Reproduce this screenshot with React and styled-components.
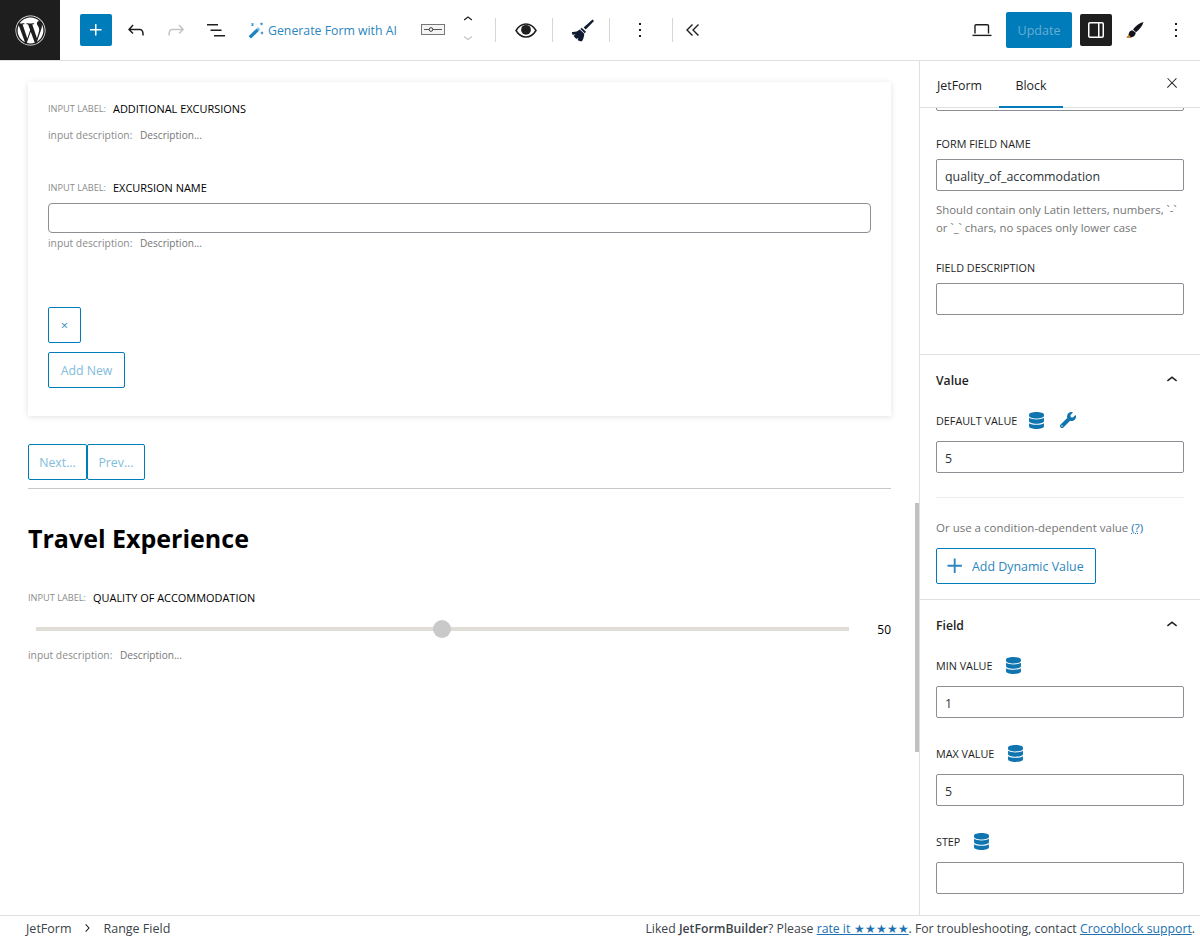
import React from "react";
import styled, { createGlobalStyle } from "styled-components";
import { FaWordpress, FaDatabase, FaWrench } from "react-icons/fa";

const Global = createGlobalStyle`
  html, body {
    margin: 0;
    height: 100%;
    overflow: hidden;
    background: #fff;
  }
  * { box-sizing: border-box; }
  body {
    font-family: "Open Sans", "Noto Sans", sans-serif;
    font-size: 12.5px;
    color: #1e1e1e;
  }
`;

const Page = styled.div`
  width: 1200px;
  height: 940px;
  display: flex;
  flex-direction: column;
  overflow: hidden;
`;

const Toolbar = styled.header`
  height: 61px;
  flex: none;
  display: flex;
  align-items: center;
  border-bottom: 1px solid #e0e0e0;
`;

const LogoBox = styled.div`
  width: 60px;
  height: 60px;
  background: #1e1e1e;
  color: #fff;
  display: flex;
  align-items: center;
  justify-content: center;
  margin-right: 20px;
  align-self: flex-start;
`;

const IconSlot = styled.div`
  width: ${p => p.$w || 40}px;
  height: 32px;
  flex: none;
  display: flex;
  align-items: center;
  justify-content: center;
  color: ${p => p.$color || "#1e1e1e"};
  margin-left: ${p => p.$ml || 0}px;
  padding: ${p => p.$pad || 0};
`;

const PrimarySquare = styled(IconSlot)`
  background: ${p => p.$bg || "#007cba"};
  color: #fff;
  border-radius: 2px;
`;

const AiButton = styled.div`
  display: flex;
  align-items: center;
  gap: 4px;
  margin-left: 12px;
  padding-top: 1px;
  width: 149px;
  color: #2d86bd;
  font-size: 12.3px;
  white-space: nowrap;
  flex: none;
`;

const Stepper = styled.div`
  width: 46px;
  height: 37px;
  margin: 0 4px 4px 0;
  display: flex;
  flex-direction: column;
  align-items: center;
  justify-content: space-between;
  flex: none;
`;

const Divider = styled.div`
  width: 1px;
  height: 24px;
  background: #d6d6d6;
  flex: none;
`;

const Push = styled.div`
  flex: 1;
`;

const UpdateButton = styled.div`
  width: 66px;
  height: 36px;
  margin: 0 8px 0 4px;
  padding-top: 1px;
  background: #007cba;
  color: #66aed4;
  border-radius: 2px;
  display: flex;
  align-items: center;
  justify-content: center;
  font-size: 12.5px;
  flex: none;
`;

const Body = styled.div`
  flex: 1;
  min-height: 0;
  display: flex;
`;

const Editor = styled.main`
  position: relative;
  width: 920px;
  flex: none;
  border-right: 1px solid #e0e0e0;
  padding: 21px 28px 0;
  overflow: hidden;
`;

const ScrollThumb = styled.div`
  position: absolute;
  right: 0;
  top: 442px;
  width: 4px;
  height: 249px;
  background: #c1c1c1;
`;

const Card = styled.section`
  height: 334px;
  padding: 18px 20px 0;
  box-shadow: 0 1px 6px rgba(0, 0, 0, 0.12);
`;

const LabelRow = styled.div`
  display: flex;
  align-items: center;
  gap: 8px;
  height: 18px;
  padding-bottom: 2px;
  margin-top: ${p => p.$mt || 0}px;
`;

const LabelHint = styled.span`
  font-size: 9.2px;
  color: #8b8b8b;
  white-space: nowrap;
  width: 57px;
`;

const LabelText = styled.span`
  font-size: 10.95px;
  color: #000;
  text-transform: uppercase;
  white-space: nowrap;
`;

const DescRow = styled.div`
  display: flex;
  align-items: center;
  gap: 8px;
  height: 18px;
  margin-top: ${p => p.$mt || 0}px;
`;

const DescHint = styled.span`
  font-size: 10.3px;
  color: #8b8b8b;
  white-space: nowrap;
  width: 84px;
`;

const DescText = styled.span`
  font-size: 10.1px;
  color: #757575;
  white-space: nowrap;
`;

const WideInput = styled.div`
  height: 30px;
  margin-top: 6px;
  border: 1px solid #8c8f94;
  border-radius: 4px;
`;

const OutlineButton = styled.div`
  display: flex;
  align-items: center;
  justify-content: center;
  width: ${p => p.$w}px;
  height: 36px;
  border: 1px solid #007cba;
  border-radius: 2px;
  color: ${p => p.$dark ? "#3a8fbe" : "#80bddc"};
  font-size: ${p => p.$dark ? 13 : 12.3}px;
  margin-top: ${p => p.$mt || 0}px;
  white-space: nowrap;
`;

const Steps = styled.div`
  display: flex;
  margin-top: 28px;
`;

const Rule = styled.hr`
  border: 0;
  height: 1px;
  background: #c8c8c8;
  margin: 8px 0 0;
`;

const Heading = styled.h2`
  margin: 30px 0 0;
  font-size: 25px;
  line-height: 38px;
  font-weight: 700;
  color: #000;
`;

const RangeRow = styled.div`
  display: flex;
  align-items: center;
  height: 24px;
  margin-top: 10px;
  padding-left: 8px;
`;

const Track = styled.div`
  position: relative;
  width: 813px;
  height: 4px;
  background: #e0dcd6;
`;

const Thumb = styled.div`
  position: absolute;
  left: 397px;
  top: -7px;
  width: 18px;
  height: 18px;
  border-radius: 50%;
  background: #c9c9c9;
`;

const RangeValue = styled.span`
  margin-left: auto;
  font-size: 12px;
  color: #000;
`;

const Sidebar = styled.aside`
  width: 280px;
  flex: none;
  display: flex;
  flex-direction: column;
  overflow: hidden;
`;

const Tabs = styled.div`
  height: 47px;
  flex: none;
  display: flex;
  align-items: center;
  border-bottom: 1px solid #e0e0e0;
  padding-left: 16px;
`;

const Tab = styled.div`
  font-size: 12.4px;
  height: 47px;
  display: flex;
  align-items: center;
  justify-content: center;
  flex: none;
  width: ${p => p.$w}px;
  margin-left: ${p => p.$ml || 0}px;
  border-bottom: ${p => p.$active ? "2px solid #007cba" : "0"};
  padding-top: ${p => p.$active ? "4px" : "2px"};
  margin-bottom: ${p => p.$active ? "-1px" : "0"};
`;

const TabClose = styled.div`
  margin-left: auto;
  margin-right: 20px;
  display: flex;
  padding-bottom: 2px;
`;

const SideScroll = styled.div`
  flex: 1;
  min-height: 0;
  overflow: hidden;
`;

const SidePanel = styled.div`
  display: flow-root;
  padding: 0 16px;
  border-bottom: ${p => p.$last ? "0" : "1px solid #e0e0e0"};
  height: ${p => p.$h ? p.$h + "px" : "auto"};
`;

const TextBox = styled.div`
  height: 32px;
  border: 1px solid #8c8f94;
  border-radius: 2px;
  padding: 2px 8px 0;
  display: flex;
  align-items: center;
  font-size: 12.4px;
  color: #2c3338;
  margin-top: ${p => p.$mt || 0}px;
`;

const ClippedBox = styled(TextBox)`
  margin-top: -29px;
`;

const FieldLabel = styled.div`
  display: flex;
  align-items: center;
  height: 18px;
  padding-bottom: 2px;
  font-size: 10.8px;
  text-transform: uppercase;
  color: #1e1e1e;
  margin-top: ${p => p.$mt || 0}px;
  white-space: nowrap;
`;

const FieldIcon = styled.span`
  display: inline-flex;
  color: #0f74b0;
  margin-left: ${p => p.$ml || 13}px;
`;

const Help = styled.p`
  margin: 10px 0 0;
  font-size: 11.4px;
  line-height: 18px;
  color: #757575;
`;

const PanelHeader = styled.div`
  display: flex;
  align-items: center;
  justify-content: space-between;
  height: 18px;
  margin-top: 16px;
  padding-right: 1px;
  font-size: 12.2px;
  font-weight: 600;
  color: #1e1e1e;
`;

const ThinRule = styled.div`
  height: 1px;
  background: #ececec;
  margin-top: 24px;
`;

const ConditionText = styled.div`
  margin-top: 22px;
  height: 18px;
  font-size: 11.5px;
  color: #757575;
  white-space: nowrap;

  a {
    color: #2271b1;
    text-decoration: underline;
    text-decoration-style: dotted;
  }
`;

const DynamicButton = styled.div`
  margin-top: 10px;
  width: 160px;
  height: 36px;
  border: 1px solid #007cba;
  border-radius: 2px;
  display: flex;
  align-items: center;
  gap: 2px;
  padding-left: 3px;
  color: #2d86bd;
  font-size: 12.4px;
  white-space: nowrap;
`;

const Footer = styled.footer`
  height: 25px;
  flex: none;
  border-top: 1px solid #e0e0e0;
  display: flex;
  align-items: center;
  padding: 0 5px 0 26px;
  font-size: 12.5px;
  color: #3c434a;
  white-space: nowrap;
`;

const Crumb = styled.span`
  display: flex;
  align-items: center;
`;

const FooterNote = styled.span`
  margin-left: auto;
  font-size: 12.25px;

  b {
    font-weight: 600;
  }

  a {
    color: #2271b1;
    text-decoration: underline;
  }
`;

const Wp = ({ size = 24, d, fill = "currentColor" }) => (
  <svg width={size} height={size} viewBox="0 0 24 24" fill={fill}>
    <path d={d} />
  </svg>
);

const PLUS = "M11 12.5V17.5H12.5V12.5H17.5V11H12.5V6H11V11H6V12.5H11Z";
const UNDO = "M18.3 11.7c-.6-.6-1.4-.9-2.3-.9H6.7l2.9-3.3-1.1-1-4.5 5L8.5 16l1-1-2.7-2.7H16c.5 0 .9.2 1.3.5 1 1 1 3.4 1 4.5v.3h1.5v-.2c0-1.5 0-4.3-1.5-5.7z";
const REDO = "M15.6 6.5l-1.1 1 2.9 3.3H8c-.9 0-1.7.3-2.3.9-1.4 1.5-1.4 4.2-1.4 5.6v.2h1.5v-.3c0-1.1 0-3.5 1-4.5.3-.3.7-.5 1.3-.5h9.2L14.5 15l1.1 1.1 4.6-4.6-4.6-5z";
const LIST = "M3 6h11v1.5H3V6Zm3.5 5.5h11V13h-11v-1.5ZM21 17H10v1.5h11V17Z";
const DOTS = "M13 19h-2v-2h2v2zm0-6h-2v-2h2v2zm0-6h-2V5h2v2z";
const CLOSE = "M13 11.8l6.1-6.3-1-1-6.1 6.2-6.1-6.3-1 1 6.1 6.3-6.5 6.7 1 1 6.5-6.6 6.5 6.6 1-1z";
const UP = "M6.5 12.4L12 8l5.5 4.4-.9 1.2L12 10l-4.5 3.6-1-1.2z";
const DOWN = "M17.5 11.6L12 16l-5.5-4.4.9-1.2L12 14l4.5-3.6 1 1.2z";
const RIGHT = "M10.6 6L9.4 7l4.6 5-4.6 5 1.2 1 5.4-6z";
const DRAWER = "M18 4H6c-1.1 0-2 .9-2 2v12c0 1.1.9 2 2 2h12c1.1 0 2-.9 2-2V6c0-1.1-.9-2-2-2zm-4 14.5H6c-.3 0-.5-.2-.5-.5V6c0-.3.2-.5.5-.5h8v13zm4.500-.5c0 .3-.2.5-.5.500h-2.500v-13H18c.3 0 .5.200.5.500v12z";

const WandIcon = () => (
  <svg width="16" height="17" viewBox="0 0 16 17">
    <path d="M.6 14.200 8.600 6.400 11 8.800 3 16.600Z" fill="#1f84bf" />
    <path d="M8.600 6.400 10 5 12.400 7.400 11 8.800Z" fill="#8cc2df" />
    <path d="M3.500 1.500 5.500 3.500M5.500 1.500 3.500 3.500M12.500 1 14.500 3M14.500 1 12.500 3M13 10 15 12M15 10 13 12" stroke="#3f93c6" strokeWidth="1.100" fill="none" />
  </svg>
);

const RangeIcon = () => (
  <svg width="24" height="11" viewBox="0 0 24 11" fill="none">
    <rect x=".5" y=".5" width="23" height="10" fill="#f4f4f4" stroke="#777" />
    <path d="M3 5.500H21" stroke="#555" />
    <circle cx="10" cy="5.500" r="1.800" fill="#fff" stroke="#333" />
  </svg>
);

const EyeIcon = () => (
  <svg width="22" height="15" viewBox="0 0 22 15">
    <path d="M1 7.500C3.500 3.300 7 1 11 1s7.500 2.300 10 6.500C18.500 11.700 15 14 11 14S3.500 11.700 1 7.500Z" fill="none" stroke="#1e1e1e" strokeWidth="1.500" />
    <circle cx="11" cy="6.800" r="4.900" fill="#1e1e1e" />
  </svg>
);

const BroomIcon = () => (
  <svg width="24" height="24" viewBox="0 0 24 24" fill="#0f1b33">
    <path d="M21.500 1.500 23 3 14.800 11.600 12.600 9.500Z" />
    <path d="M10.700 9.700 15 13.800 13.800 15.200 9.400 11Z" />
    <path d="M8.800 11.500 13.300 15.800C13 18.500 12.500 21 11 23.200 9.500 23.400 7.800 22.800 6.600 21.900L7.400 19.800 5.500 21C4.300 20.200 3.300 19 2.500 17.800L4.700 16.400 1.500 16.700C1 15.800.8 14.800 1 14 4 14.200 6.800 13.400 8.800 11.500Z" />
  </svg>
);

const DoubleLeft = () => (
  <svg width="16" height="16" viewBox="0 0 16 16" fill="none" stroke="#1e1e1e" strokeWidth="1.400">
    <path d="M7.500 2.500 2 8l5.500 5.500M13.500 2.500 8 8l5.500 5.500" />
  </svg>
);

const LaptopIcon = () => (
  <svg width="20" height="14" viewBox="0 0 20 14" fill="none" stroke="#1e1e1e" strokeWidth="1.400">
    <path d="M3 10.500V2.700c0-.6.400-1 1-1H15.500c.6 0 1 .4 1 1V10.500" />
    <path d="M0.500 12.400H19.500" />
  </svg>
);

const BrushIcon = () => (
  <svg width="18" height="18" viewBox="0 0 18 18">
    <path d="M17.500 1C13.500 2 9.500 5 7 8.500L10 11.200C13.500 8.500 16.500 5 17.500 1Z" fill="#12131c" />
    <path d="M6.200 9.200C4 9.500 3 11 2.700 13 2.500 14.500 1.800 15.500.5 16.200 3.500 17 7.500 16.500 9 14 9.800 12.800 9.800 12 9.400 11.300Z" fill="#12131c" />
    <path d="M2.700 13C2.500 14.500 1.800 15.500.5 16.200 2 16.600 3.800 16.700 5.300 16.300 4 15.500 3.200 14.300 2.700 13Z" fill="#e08a1e" />
  </svg>
);

const Db = () => <FaDatabase size={17} />;

export default function App() {
  return (
    <Page>
      <Global />
      <Toolbar>
        <LogoBox><FaWordpress size={31} /></LogoBox>
        <PrimarySquare $w={32}><Wp d={PLUS} /></PrimarySquare>
        <IconSlot $ml={4}><Wp d={UNDO} /></IconSlot>
        <IconSlot $color="#c4c4c4"><Wp d={REDO} /></IconSlot>
        <IconSlot><Wp d={LIST} /></IconSlot>
        <AiButton><WandIcon />Generate Form with AI</AiButton>
        <IconSlot $w={24} $ml={24} $pad="0 0 2px"><RangeIcon /></IconSlot>
        <Stepper>
          <Wp d={UP} />
          <Wp d={DOWN} fill="#c4c4c4" />
        </Stepper>
        <Divider />
        <IconSlot $w={56} $pad="0 0 0 4px"><EyeIcon /></IconSlot>
        <Divider />
        <IconSlot $w={56} $pad="0 0 0 4px"><BroomIcon /></IconSlot>
        <Divider />
        <IconSlot $w={62} $pad="0 2px 0 0"><Wp d={DOTS} /></IconSlot>
        <Divider />
        <IconSlot $w={40}><DoubleLeft /></IconSlot>
        <Push />
        <IconSlot $w={40}><LaptopIcon /></IconSlot>
        <UpdateButton>Update</UpdateButton>
        <PrimarySquare $w={32} $bg="#1e1e1e"><Wp d={DRAWER} /></PrimarySquare>
        <IconSlot $w={46}><BrushIcon /></IconSlot>
        <IconSlot $w={36}><Wp d={DOTS} /></IconSlot>
        <IconSlot $w={6} />
      </Toolbar>

      <Body>
        <Editor>
          <Card>
            <LabelRow>
              <LabelHint>INPUT LABEL:</LabelHint>
              <LabelText>Additional Excursions</LabelText>
            </LabelRow>
            <DescRow $mt={8}>
              <DescHint>input description:</DescHint>
              <DescText>Description...</DescText>
            </DescRow>
            <LabelRow $mt={35}>
              <LabelHint>INPUT LABEL:</LabelHint>
              <LabelText>Excursion Name</LabelText>
            </LabelRow>
            <WideInput />
            <DescRow $mt={1}>
              <DescHint>input description:</DescHint>
              <DescText>Description...</DescText>
            </DescRow>
            <OutlineButton $w={33} $dark $mt={55}>×</OutlineButton>
            <OutlineButton $w={77} $mt={9}>Add New</OutlineButton>
          </Card>

          <Steps>
            <OutlineButton $w={59}>Next...</OutlineButton>
            <OutlineButton $w={58}>Prev...</OutlineButton>
          </Steps>
          <Rule />
          <Heading>Travel Experience</Heading>

          <LabelRow $mt={32}>
            <LabelHint>INPUT LABEL:</LabelHint>
            <LabelText>Quality of accommodation</LabelText>
          </LabelRow>
          <RangeRow>
            <Track><Thumb /></Track>
            <RangeValue>50</RangeValue>
          </RangeRow>
          <DescRow $mt={5}>
            <DescHint>input description:</DescHint>
            <DescText>Description...</DescText>
          </DescRow>
          <ScrollThumb />
        </Editor>

        <Sidebar>
          <Tabs>
            <Tab $w={47}>JetForm</Tab>
            <Tab $w={64} $ml={16} $active>Block</Tab>
            <TabClose><Wp size={16} d={CLOSE} /></TabClose>
          </Tabs>
          <SideScroll>
            <SidePanel $h={247}>
              <ClippedBox />
              <FieldLabel $mt={24}>Form Field Name</FieldLabel>
              <TextBox $mt={6}>quality_of_accommodation</TextBox>
              <Help>Should contain only Latin letters, numbers, `-`<br />or `_` chars, no spaces only lower case</Help>
              <FieldLabel $mt={22}>Field Description</FieldLabel>
              <TextBox $mt={6} />
            </SidePanel>
            <SidePanel $h={245}>
              <PanelHeader>Value<Wp size={22} d={UP} /></PanelHeader>
              <FieldLabel $mt={23}>
                Default Value
                <FieldIcon $ml={11}><Db /></FieldIcon>
                <FieldIcon $ml={15}><FaWrench size={16} /></FieldIcon>
              </FieldLabel>
              <TextBox $mt={11}>5</TextBox>
              <ThinRule />
              <ConditionText>Or use a condition-dependent value <a>(?)</a></ConditionText>
              <DynamicButton><Wp size={30} d={PLUS} />Add Dynamic Value</DynamicButton>
            </SidePanel>
            <SidePanel $last>
              <PanelHeader>Field<Wp size={22} d={UP} /></PanelHeader>
              <FieldLabel $mt={23}>Min Value<FieldIcon><Db /></FieldIcon></FieldLabel>
              <TextBox $mt={11}>1</TextBox>
              <FieldLabel $mt={27}>Max Value<FieldIcon><Db /></FieldIcon></FieldLabel>
              <TextBox $mt={11}>5</TextBox>
              <FieldLabel $mt={27}>Step<FieldIcon><Db /></FieldIcon></FieldLabel>
              <TextBox $mt={11} />
            </SidePanel>
          </SideScroll>
        </Sidebar>
      </Body>

      <Footer>
        <Crumb>JetForm</Crumb>
        <Crumb><IconSlot $w={32}><Wp size={16} d={RIGHT} /></IconSlot>Range Field</Crumb>
        <FooterNote>
          Liked <b>JetFormBuilder</b>? Please <a>rate it ★★★★★</a>. For troubleshooting, contact <a>Crocoblock support</a>.
        </FooterNote>
      </Footer>
    </Page>
  );
}
